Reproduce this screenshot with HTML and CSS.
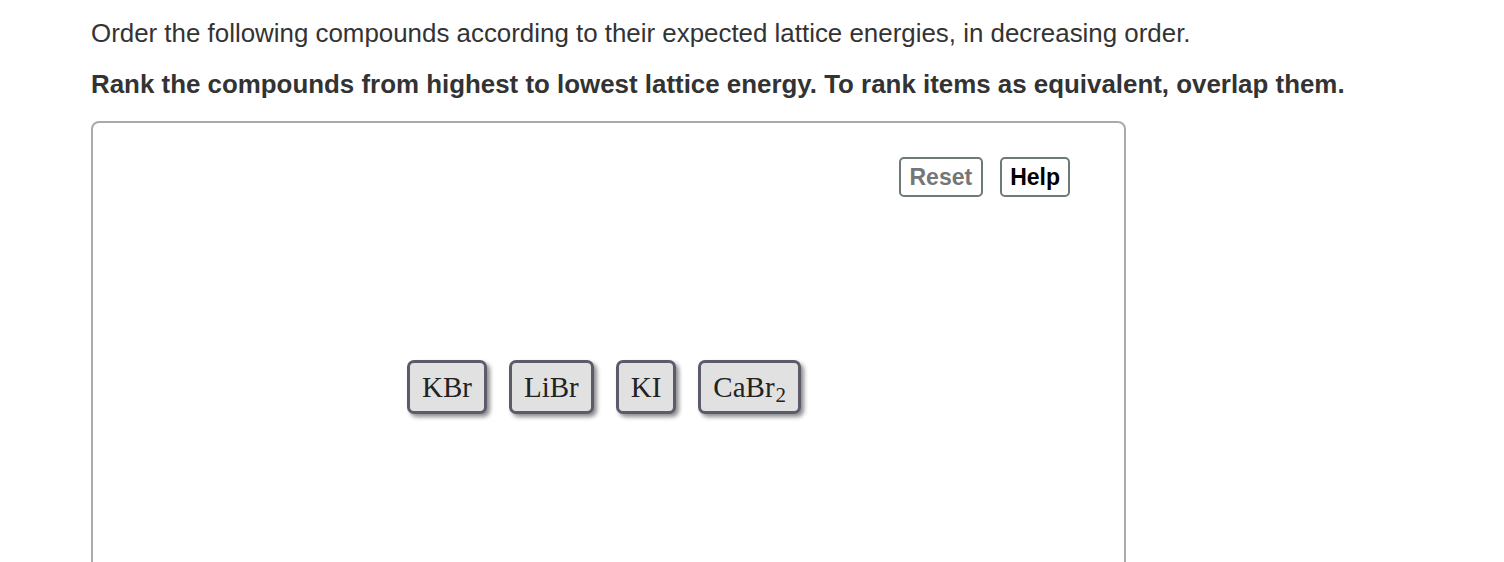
FILE: index.html
```html
<!DOCTYPE html>
<html lang="en">
<head>
    <meta charset="UTF-8">
    <meta name="viewport" content="width=device-width, initial-scale=1.0">
    <title>Lattice energy ranking</title>
    <link rel="stylesheet" href="styles.css">
</head>
<body>
    <div class="page">
        <p class="prompt">Order the following compounds according to their expected lattice energies, in decreasing order.</p>
        <p class="instruction">Rank the compounds from highest to lowest lattice energy. To rank items as equivalent, overlap them.</p>

        <!-- ranking area -->
        <div class="rank-box">
            <div class="toolbar">
                <button class="tool-button reset">Reset</button>
                <button class="tool-button help">Help</button>
            </div>
            <div class="tiles">
                <div class="tile">KBr</div>
                <div class="tile">LiBr</div>
                <div class="tile">KI</div>
                <div class="tile">CaBr<sub>2</sub></div>
            </div>
        </div>
    </div>
</body>
</html>
```

FILE: styles.css
```css
body {
    margin: 0;
    padding: 0;
    background-color: white;
    font-family: "Liberation Sans", Arial, sans-serif;
    color: #333;
}

.page {
    padding: 16px 0 0 91px;
}

.prompt {
    margin: 0;
    font-size: 25.9px;
    line-height: 34px;
}

.instruction {
    margin: 17px 0 0 0;
    font-size: 25.9px;
    line-height: 34px;
    font-weight: bold;
}

.rank-box {
    margin-top: 20px;
    width: 1035px;
    height: 520px;
    border: 2px solid #aaa;
    border-radius: 8px;
    box-sizing: border-box;
}

.toolbar {
    display: flex;
    justify-content: flex-end;
    gap: 17px;
    padding: 34px 54px 0 0;
}

.tool-button {
    font-family: "Liberation Sans", Arial, sans-serif;
    font-size: 23px;
    font-weight: bold;
    background: white;
    border: 2px solid #6e7979;
    border-radius: 5px;
    height: 40px;
    padding: 0 8px;
    cursor: pointer;
}

.reset {
    color: #767676;
    padding: 0 9px;
}

.help {
    color: black;
}

.tiles {
    display: flex;
    gap: 22px;
    margin: 163px 0 0 314px;
}

.tile {
    font-family: "Liberation Serif", "Times New Roman", serif;
    font-size: 29px;
    line-height: 48px;
    color: #222;
    background-color: #e1e1e1;
    border: 3px solid #5b5b6b;
    border-radius: 7px;
    height: 48px;
    padding: 0 12px;
    box-shadow: 3px 3px 4px rgba(0, 0, 0, 0.45);
}

.tile sub {
    font-size: 21px;
    line-height: 0;
    vertical-align: -5px;
    margin-left: 1px;
}
```
